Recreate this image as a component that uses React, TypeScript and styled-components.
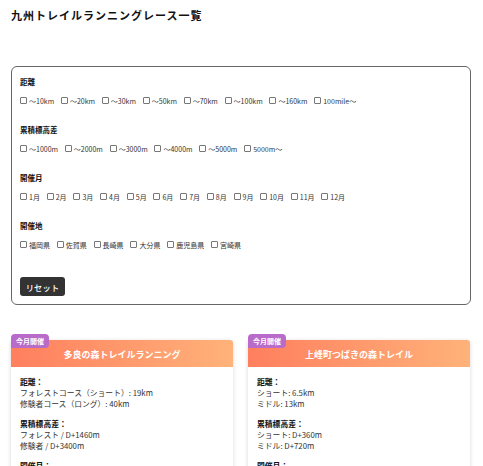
import React, { FC } from 'react';
import styled, { createGlobalStyle } from 'styled-components';

const GlobalStyle = createGlobalStyle`
  html, body {
    margin: 0;
    padding: 0;
    background: #fff;
    height: 466px;
    overflow: hidden;
  }
  body {
    font-family: "Noto Sans CJK JP", "Noto Sans", sans-serif;
    color: #222;
  }
`;

const Page = styled.div`
  padding: 8px 12px 0 11px;
`;

const Title = styled.h1`
  margin: 0 0 44px;
  font-size: 11px;
  line-height: 14px;
  font-weight: 700;
  letter-spacing: 1px;
  color: #111;
`;

const FilterBox = styled.section`
  box-sizing: border-box;
  height: 239px;
  padding: 10px 8px;
  border: 1px solid #666;
  border-radius: 6px;
  margin-bottom: 29px;
`;

const Group = styled.div`
  height: 48px;
`;

const GroupTitle = styled.h2`
  margin: 0 0 8px;
  font-size: 7.5px;
  line-height: 10px;
  font-weight: 700;
  color: #111;
`;

const Options = styled.div`
  display: flex;
  gap: 6.8px;
`;

const Option = styled.label`
  display: flex;
  align-items: center;
  gap: 2px;
  font-size: 7px;
  line-height: 12px;
  color: #333;
  white-space: nowrap;
`;

const Check = styled.input.attrs({ type: 'checkbox' })`
  appearance: none;
  box-sizing: border-box;
  width: 7px;
  height: 7px;
  margin: 0 0 1px;
  border: 1px solid #777;
  border-radius: 1px;
  background: #fff;
`;

const ResetButton = styled.button`
  display: block;
  margin-top: 8px;
  width: 45px;
  height: 19px;
  padding: 0;
  border: none;
  border-radius: 3px;
  background: #333;
  color: #fff;
  font-family: inherit;
  font-size: 8.2px;
  font-weight: 500;
  letter-spacing: 0.2px;
`;

const Cards = styled.div`
  display: grid;
  grid-template-columns: 222px 222px;
  gap: 15px;
`;

const Card = styled.article`
  position: relative;
  background: #fff;
  box-shadow: 0 1px 4px rgba(0, 0, 0, 0.16);
  border-radius: 3px 3px 0 0;
  margin-top: 6px;
`;

const Badge = styled.span`
  position: absolute;
  left: 0;
  top: -6px;
  width: 38px;
  height: 14px;
  border-radius: 4px 4px 4px 0;
  background: #b86bc8;
  color: #fff;
  font-size: 7px;
  line-height: 14px;
  font-weight: 700;
  text-align: center;
`;

const CardHeader = styled.h3`
  margin: 0;
  height: 27px;
  background: linear-gradient(90deg, #ff7f5e, #ffb27a);
  border-radius: 3px 3px 0 0;
  color: #fff;
  font-size: 9px;
  line-height: 29px;
  font-weight: 700;
  text-align: center;
`;

const CardBody = styled.div`
  padding: 9px 9px 0;
`;

const Info = styled.div`
  margin-bottom: 9px;
  font-size: 7.8px;
  line-height: 11px;
  color: #333;
`;

const InfoLabel = styled.div`
  font-weight: 700;
  color: #111;
`;

const filters = [
  { title: '距離', items: ['〜10km', '〜20km', '〜30km', '〜50km', '〜70km', '〜100km', '〜160km', '100mile〜'] },
  { title: '累積標高差', items: ['〜1000m', '〜2000m', '〜3000m', '〜4000m', '〜5000m', '5000m〜'] },
  { title: '開催月', items: ['1月', '2月', '3月', '4月', '5月', '6月', '7月', '8月', '9月', '10月', '11月', '12月'] },
  { title: '開催地', items: ['福岡県', '佐賀県', '長崎県', '大分県', '鹿児島県', '宮崎県'] },
];

const races = [
  {
    name: '多良の森トレイルランニング',
    info: [
      { label: '距離：', lines: ['フォレストコース（ショート）: 19km', '修験者コース（ロング）: 40km'] },
      { label: '累積標高差：', lines: ['フォレスト / D+1460m', '修験者 / D+3400m'] },
      { label: '開催月：', lines: [] },
    ],
  },
  {
    name: '上峰町つばきの森トレイル',
    info: [
      { label: '距離：', lines: ['ショート: 6.5km', 'ミドル: 13km'] },
      { label: '累積標高差：', lines: ['ショート: D+360m', 'ミドル: D+720m'] },
      { label: '開催月：', lines: [] },
    ],
  },
];

const App: FC = () => (
  <Page>
    <GlobalStyle />
    <Title>九州トレイルランニングレース一覧</Title>
    <FilterBox>
      {filters.map((group) => (
        <Group key={group.title}>
          <GroupTitle>{group.title}</GroupTitle>
          <Options>
            {group.items.map((item) => (
              <Option key={item}>
                <Check />
                {item}
              </Option>
            ))}
          </Options>
        </Group>
      ))}
      <ResetButton>リセット</ResetButton>
    </FilterBox>
    <Cards>
      {races.map((race) => (
        <Card key={race.name}>
          <Badge>今月開催</Badge>
          <CardHeader>{race.name}</CardHeader>
          <CardBody>
            {race.info.map((row) => (
              <Info key={row.label}>
                <InfoLabel>{row.label}</InfoLabel>
                {row.lines.map((line) => (
                  <div key={line}>{line}</div>
                ))}
              </Info>
            ))}
          </CardBody>
        </Card>
      ))}
    </Cards>
  </Page>
);

export default App;
